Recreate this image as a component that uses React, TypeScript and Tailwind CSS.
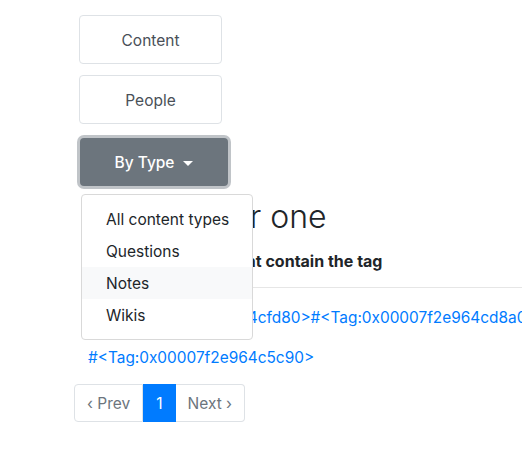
import { useState } from 'react'

const menuItems = ['All content types', 'Questions', 'Notes', 'Wikis']

export default function App() {
  const [active] = useState('Notes')

  return (
    <div className="w-[522px] h-[455px] overflow-hidden bg-white text-[#212529] font-['Inter','Liberation_Sans',sans-serif]">
      <div className="flex flex-col items-start pt-[15px]">
        <button className="ml-[79px] w-[143px] h-[49px] pt-[2px] border border-[#dee2e6] rounded-[4px] bg-white text-[15.5px] text-[#495057]">
          Content
        </button>
        <button className="ml-[79px] mt-[11px] w-[143px] h-[49px] pt-[2px] border border-[#dee2e6] rounded-[4px] bg-white text-[15.5px] text-[#495057]">
          People
        </button>

        <div className="relative ml-[80px] mt-[14px]">
          <button className="flex items-center justify-center gap-[9px] w-[148px] h-[48px] pt-[2px] rounded-[4px] bg-[#6c757d] text-white text-[15.5px] font-medium shadow-[0_0_0_3px_rgba(130,138,145,0.5)]">
            <span>By Type</span>
            <span className="w-0 h-0 border-x-[5px] border-x-transparent border-t-[5px] border-t-white" />
          </button>

          <div className="absolute left-[1px] top-[56px] z-10 w-[172px] py-[8px] bg-white border border-[#d9d9d9] rounded-[4px]">
            {menuItems.map((item) => (
              <div
                key={item}
                className={`h-[32px] px-[24px] pt-[2px] flex items-center whitespace-nowrap text-[15.5px] text-[#212529] ${item === active ? 'bg-[#f8f9fa]' : ''}`}
              >
                {item}
              </div>
            ))}
          </div>
        </div>

        <div className="w-full pl-[88px]">
          <h2 className="mt-[8px] ml-[16px] h-[46px] leading-[46px] text-[32px] font-light text-[#212529] whitespace-nowrap">
            Results for one
          </h2>
          <h6 className="mt-[9px] ml-[111px] h-[24px] leading-[24px] text-[16px] font-bold whitespace-nowrap">
            Content contain the tag
          </h6>
          <hr className="mt-[14px] border-0 border-t border-[#e6e6e6]" />
          <p className="mt-[18px] h-[24px] leading-[24px] text-[15.4px] text-[#007bff] whitespace-nowrap">
            #&lt;Tag:0x00007f2e964cfd80&gt;#&lt;Tag:0x00007f2e964cd8a0&gt;#&lt;Tag:0x00007f2e964cd3f0&gt;
          </p>
          <p className="mt-[16px] h-[24px] leading-[24px] text-[15.4px] text-[#007bff] whitespace-nowrap">
            #&lt;Tag:0x00007f2e964c5c90&gt;
          </p>
        </div>

        <nav className="ml-[74px] mt-[14px] flex h-[38px] text-[15.5px]">
          <span className="flex items-center px-[12px] pt-[1px] border border-[#dee2e6] rounded-l-[4px] text-[#6c757d]">
            ‹ Prev
          </span>
          <span className="flex items-center px-[12px] pt-[1px] bg-[#007bff] border border-[#007bff] text-white">
            1
          </span>
          <span className="flex items-center px-[12px] pt-[1px] border border-[#dee2e6] border-l-0 rounded-r-[4px] text-[#6c757d]">
            Next ›
          </span>
        </nav>
      </div>
    </div>
  )
}
